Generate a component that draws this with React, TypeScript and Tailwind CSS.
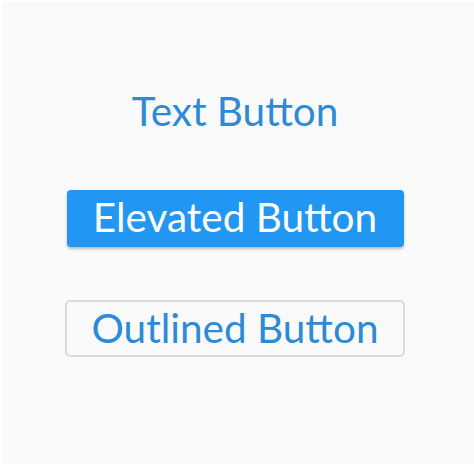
const lato = "font-['Lato','Noto_Sans',sans-serif]";

export default function App() {
  return (
    <div className={`w-[474px] h-[467px] bg-white ${lato}`}>
      <div className="ml-[2px] mt-[2px] h-[462px] w-[472px] bg-[#fafafa] pr-[6px] flex flex-col items-center">
        <button
          type="button"
          className="mt-[83px] h-[52px] px-4 text-[40.5px] leading-none text-[#2d8ad6]"
        >
          Text Button
        </button>
        <button
          type="button"
          className="mt-[53px] w-[337px] h-[57px] rounded-[4px] bg-[#2196f3] text-[40.5px] leading-none text-white pb-[2px] shadow-[0_2px_3px_rgba(0,0,0,0.25)]"
        >
          Elevated Button
        </button>
        <button
          type="button"
          className="mt-[53px] w-[340px] h-[57px] rounded-[5px] border-2 border-[#dcdcdc] text-[40.5px] leading-none text-[#2d8ad6] pb-[1px]"
        >
          Outlined Button
        </button>
      </div>
    </div>
  );
}
